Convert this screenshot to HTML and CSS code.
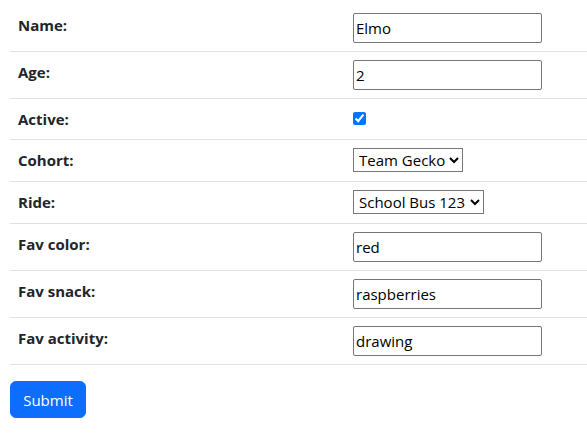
FILE: index.html
```html
<!DOCTYPE html>
<html lang="en">
<head>
<meta charset="utf-8">
<title>Form</title>
<link rel="stylesheet" href="styles.css">
</head>
<body>
<div class="page">
  <form class="profile-form">
    <table class="form-table">
      <tbody>
        <tr>
          <th class="label-cell">Name:</th>
          <td class="field-cell"><input class="text-field" type="text" value="Elmo"></td>
        </tr>
        <tr>
          <th class="label-cell">Age:</th>
          <td class="field-cell"><input class="text-field" type="text" value="2"></td>
        </tr>
        <tr>
          <th class="label-cell">Active:</th>
          <td class="field-cell"><input class="check-field" type="checkbox" checked></td>
        </tr>
        <tr>
          <th class="label-cell">Cohort:</th>
          <td class="field-cell">
            <select class="select-field select-cohort">
              <option selected>Team Gecko</option>
              <option>Team Otter</option>
            </select>
          </td>
        </tr>
        <tr>
          <th class="label-cell">Ride:</th>
          <td class="field-cell">
            <select class="select-field select-ride">
              <option selected>School Bus 123</option>
              <option>Walker</option>
            </select>
          </td>
        </tr>
        <tr>
          <th class="label-cell">Fav color:</th>
          <td class="field-cell"><input class="text-field" type="text" value="red"></td>
        </tr>
        <tr>
          <th class="label-cell">Fav snack:</th>
          <td class="field-cell"><input class="text-field" type="text" value="raspberries"></td>
        </tr>
        <tr>
          <th class="label-cell">Fav activity:</th>
          <td class="field-cell"><input class="text-field" type="text" value="drawing"></td>
        </tr>
      </tbody>
    </table>
    <button class="btn-submit" type="submit">Submit</button>
  </form>
</div>
</body>
</html>
```

FILE: styles.css
```css
* {
  box-sizing: border-box;
}

body {
  margin: 0;
  font-family: "Open Sans", "Noto Sans", "Liberation Sans", sans-serif;
  font-size: 15px;
  line-height: 24px;
  color: #212529;
  background: #ffffff;
}

.page {
  padding: 5px 0 0 10px;
}

.form-table {
  width: 577px;
  border-collapse: collapse;
  margin-bottom: 16px;
  vertical-align: top;
}

.form-table tr {
  border-bottom: 1px solid #dee2e6;
}

.label-cell,
.field-cell {
  padding: 8px;
  text-align: left;
  vertical-align: top;
}

.label-cell {
  width: 335px;
  font-weight: 700;
}

.text-field {
  width: 189px;
  height: 30px;
  margin: 0;
  padding: 1px 2px;
  border: 1px solid #767676;
  border-radius: 2px;
  font-family: inherit;
  font-size: 15px;
  line-height: 24px;
  color: #000000;
  background: #ffffff;
}

.check-field {
  width: 13px;
  height: 13px;
  margin: 5px 0 0 0;
  vertical-align: top;
  accent-color: #0075ff;
}

.select-field {
  height: 24px;
  margin: 0 0 1px 0;
  padding: 0 0 0 1px;
  border: 1px solid #767676;
  border-radius: 0;
  font-family: inherit;
  font-size: 15px;
  color: #000000;
  background: #ffffff;
  vertical-align: top;
}

.select-cohort {
  width: 110px;
}

.select-ride {
  width: 131px;
}

.btn-submit {
  display: inline-block;
  width: 76px;
  height: 37px;
  padding: 6px 12px;
  border: 1px solid #0d6efd;
  border-radius: 6px;
  background: #0d6efd;
  color: #ffffff;
  font-family: inherit;
  font-size: 15px;
  line-height: 24px;
  cursor: pointer;
}
```
